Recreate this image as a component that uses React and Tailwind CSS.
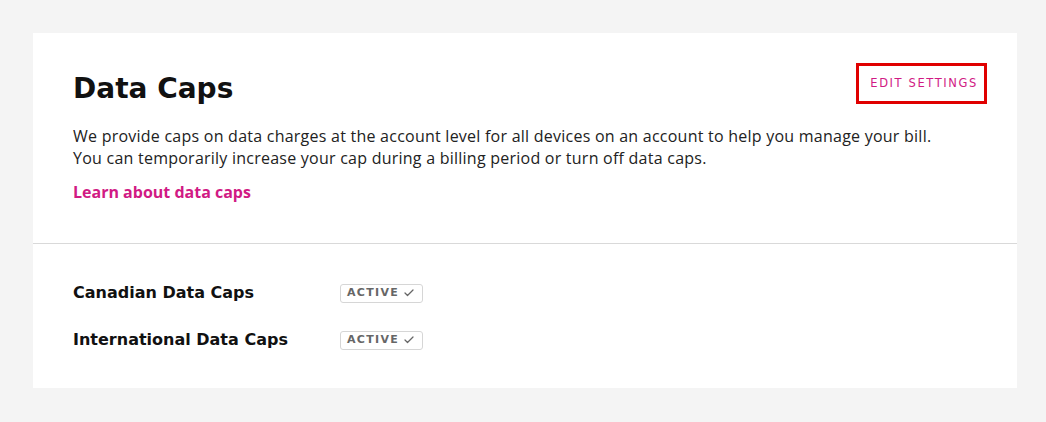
import { Check } from "lucide-react";

const rows = ["Canadian Data Caps", "International Data Caps"];

function StatusBadge() {
  return (
    <span className="inline-flex items-center gap-[6px] h-[19px] pl-[6px] pr-[7px] rounded-[3px] border border-[#d6d6d6] font-['DejaVu_Sans',sans-serif] text-[11px] font-bold tracking-[0.12em] text-[#666666]">
      ACTIVE
      <Check size={12} strokeWidth={2.5} className="-ml-[2px] text-[#666666]" />
    </span>
  );
}

export default function App() {
  return (
    <div className="min-h-[422px] bg-[#f4f4f4] pt-[33px] pl-[33px] pr-[29px] font-['Open_Sans',sans-serif] text-[#1a1a1a]">
      <div className="bg-white">
        <div className="px-10 pt-[38px] pb-[40px] border-b border-[#d9d9d9]">
          <div className="flex items-start justify-between">
            <h1 className="text-[28px] leading-[36px] font-bold font-['DejaVu_Sans',sans-serif] text-[#111111]">
              Data Caps
            </h1>
            <button className="-mt-[8px] -mr-[10px] h-[41px] pl-[11px] pr-[6px] border-[3px] border-[#e00000] font-['DejaVu_Sans',sans-serif] text-[11.5px] tracking-[0.14em] text-[#d11a84]">
              EDIT SETTINGS
            </button>
          </div>
          <p className="mt-[18px] text-[16px] leading-[22px] tracking-[0.015em] text-[#222222]">
            We provide caps on data charges at the account level for all devices on an account to help you manage your bill.
            <br />
            You can temporarily increase your cap during a billing period or turn off data caps.
          </p>
          <a href="#" className="block mt-[12px] text-[16px] leading-[22px] font-bold text-[#d11a84]">
            Learn about data caps
          </a>
        </div>
        <div className="px-10 pt-[38px] pb-[37px] flex flex-col gap-[25px]">
          {rows.map((r) => (
            <div key={r} className="flex items-center">
              <div className="w-[267px] text-[16px] leading-[22px] font-bold font-['DejaVu_Sans',sans-serif] text-[#111111]">{r}</div>
              <StatusBadge />
            </div>
          ))}
        </div>
      </div>
    </div>
  );
}
